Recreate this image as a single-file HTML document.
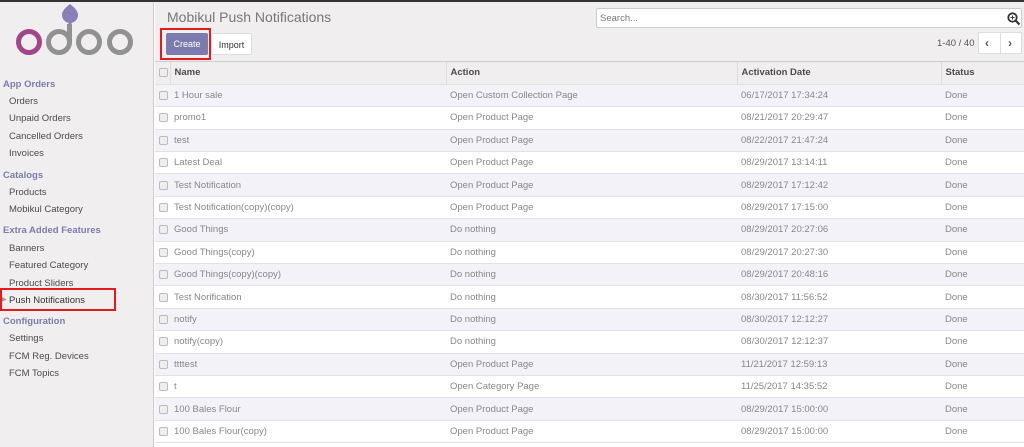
<!DOCTYPE html><html><head><style>
*{box-sizing:border-box;margin:0;padding:0}
body{width:1024px;height:447px;overflow:hidden;font-family:"Liberation Sans",sans-serif;background:#fff;position:relative;font-size:9.5px}
.top{position:absolute;left:0;top:0;width:1024px;height:2px;background:#333}
.side{position:absolute;left:0;top:2px;width:154px;height:445px;background:#f0eeee;border-right:1px solid #ccc}
.side div{position:absolute;left:9px;color:#4c4c4c;font-size:9.5px}
.side .h{left:3px;color:#7c7bad;font-weight:bold}
.hdr{position:absolute;left:155px;top:2px;width:869px;height:60px;background:#f0eeee;border-bottom:1px solid #ccc}
.title{position:absolute;left:167px;top:9px;font-size:14px;color:#777}
.search{position:absolute;left:596px;top:8px;width:426px;height:20px;background:#fff;border:1px solid #ccc;border-radius:2px;color:#777;font-size:9.5px;padding:4px 3px}
.btn{position:absolute;top:33px;height:22px;font-size:9px;padding-top:6px;text-align:center;border-radius:2px}
table{position:absolute;left:155px;top:62px;width:869px;border-collapse:collapse}
td,th{height:22.4px;text-align:left;padding-left:4px;color:#888;font-weight:normal;border-bottom:1px solid #e2e2e2;white-space:nowrap}
th{color:#4c4c4c;font-weight:bold;background:#f0eeee;border-left:1px solid #ddd}
tr:nth-child(even) td{background:#f2f2f8}
.cb{width:15px;padding-left:4px}
.cb span{display:inline-block;width:9px;height:9px;border:1px solid #bbb;border-radius:2px;background:#eee;vertical-align:middle}
</style></head><body>
<div class="top"></div>
<div class="side">
<svg style="position:absolute;left:0;top:0" width="150" height="60">
<path d="M70 -2 L70 2 C65 6 62 9 62 13 A8 8 0 0 0 78 13 C78 9 75 6 70 2Z" fill="#8a7fb8"/>
<rect x="68.5" y="20" width="3" height="6" fill="#8a7fb8"/>
<circle cx="29" cy="40" r="10.5" fill="none" stroke="#a24689" stroke-width="5"/>
<circle cx="59" cy="40" r="10.5" fill="none" stroke="#919191" stroke-width="5"/>
<rect x="67" y="22" width="5" height="18" fill="#919191"/>
<circle cx="89" cy="40" r="10.5" fill="none" stroke="#919191" stroke-width="5"/>
<circle cx="120" cy="40" r="10.5" fill="none" stroke="#919191" stroke-width="5"/>
</svg>
<div class="h" style="top:77px">App Orders</div>
<div style="top:94px">Orders</div>
<div style="top:111px">Unpaid Orders</div>
<div style="top:129px">Cancelled Orders</div>
<div style="top:146px">Invoices</div>
<div class="h" style="top:168px">Catalogs</div>
<div style="top:185px">Products</div>
<div style="top:202px">Mobikul Category</div>
<div class="h" style="top:223px">Extra Added Features</div>
<div style="top:241px">Banners</div>
<div style="top:258px">Featured Category</div>
<div style="top:276px">Product Sliders</div>
<div style="top:293px;color:#333">Push Notifications</div>
<div style="left:2px;top:294px;color:#999;font-size:6px">▶</div>
<div class="h" style="top:314px">Configuration</div>
<div style="top:331px">Settings</div>
<div style="top:349px">FCM Reg. Devices</div>
<div style="top:366px">FCM Topics</div>
</div>
<div style="position:absolute;left:0;top:288px;width:116px;height:23px;border:2px solid #e31b1b"></div>
<div class="hdr"></div>
<div class="title">Mobikul Push Notifications</div>
<div class="search">Search...</div>
<svg style="position:absolute;left:1007px;top:12px" width="14" height="14"><circle cx="5.5" cy="5.5" r="4.2" fill="none" stroke="#333" stroke-width="1.8"/><path d="M8.5 8.5l4 4" stroke="#333" stroke-width="2.2"/><path d="M5.5 3.5v4M3.5 5.5h4" stroke="#333" stroke-width="1"/></svg>
<div class="btn" style="left:166px;width:42px;background:#7c7bad;color:#fff">Create</div>
<div class="btn" style="left:211px;width:41px;background:#fff;border:1px solid #ddd;color:#333">Import</div>
<div style="position:absolute;left:160px;top:28px;width:51px;height:32px;border:2px solid #e31b1b"></div>
<div style="position:absolute;left:937px;top:38px;color:#555;font-size:9.5px">1-40 / 40</div>
<div style="position:absolute;left:978px;top:32px;width:44px;height:22px;border:1px solid #ddd;background:#fff;border-radius:2px"><div style="position:absolute;left:21px;top:0;width:1px;height:20px;background:#ddd"></div><span style="position:absolute;left:6px;top:3px;font-size:12px;color:#555;font-weight:bold">‹</span><span style="position:absolute;left:29px;top:3px;font-size:12px;color:#555;font-weight:bold">›</span></div>
<table>
<tr><th class="cb" style="border-left:none"><span></span></th><th style="width:276px">Name</th><th style="width:291px">Action</th><th style="width:204px">Activation Date</th><th>Status</th></tr>
<tr><td class="cb"><span></span></td><td>1 Hour sale</td><td>Open Custom Collection Page</td><td>06/17/2017 17:34:24</td><td>Done</td></tr>
<tr><td class="cb"><span></span></td><td>promo1</td><td>Open Product Page</td><td>08/21/2017 20:29:47</td><td>Done</td></tr>
<tr><td class="cb"><span></span></td><td>test</td><td>Open Product Page</td><td>08/22/2017 21:47:24</td><td>Done</td></tr>
<tr><td class="cb"><span></span></td><td>Latest Deal</td><td>Open Product Page</td><td>08/29/2017 13:14:11</td><td>Done</td></tr>
<tr><td class="cb"><span></span></td><td>Test Notification</td><td>Open Product Page</td><td>08/29/2017 17:12:42</td><td>Done</td></tr>
<tr><td class="cb"><span></span></td><td>Test Notification(copy)(copy)</td><td>Open Product Page</td><td>08/29/2017 17:15:00</td><td>Done</td></tr>
<tr><td class="cb"><span></span></td><td>Good Things</td><td>Do nothing</td><td>08/29/2017 20:27:06</td><td>Done</td></tr>
<tr><td class="cb"><span></span></td><td>Good Things(copy)</td><td>Do nothing</td><td>08/29/2017 20:27:30</td><td>Done</td></tr>
<tr><td class="cb"><span></span></td><td>Good Things(copy)(copy)</td><td>Do nothing</td><td>08/29/2017 20:48:16</td><td>Done</td></tr>
<tr><td class="cb"><span></span></td><td>Test Norification</td><td>Do nothing</td><td>08/30/2017 11:56:52</td><td>Done</td></tr>
<tr><td class="cb"><span></span></td><td>notify</td><td>Do nothing</td><td>08/30/2017 12:12:27</td><td>Done</td></tr>
<tr><td class="cb"><span></span></td><td>notify(copy)</td><td>Do nothing</td><td>08/30/2017 12:12:37</td><td>Done</td></tr>
<tr><td class="cb"><span></span></td><td>ttttest</td><td>Open Product Page</td><td>11/21/2017 12:59:13</td><td>Done</td></tr>
<tr><td class="cb"><span></span></td><td>t</td><td>Open Category Page</td><td>11/25/2017 14:35:52</td><td>Done</td></tr>
<tr><td class="cb"><span></span></td><td>100 Bales Flour</td><td>Open Product Page</td><td>08/29/2017 15:00:00</td><td>Done</td></tr>
<tr><td class="cb"><span></span></td><td>100 Bales Flour(copy)</td><td>Open Product Page</td><td>08/29/2017 15:00:00</td><td>Done</td></tr>
</table>
</body></html>
